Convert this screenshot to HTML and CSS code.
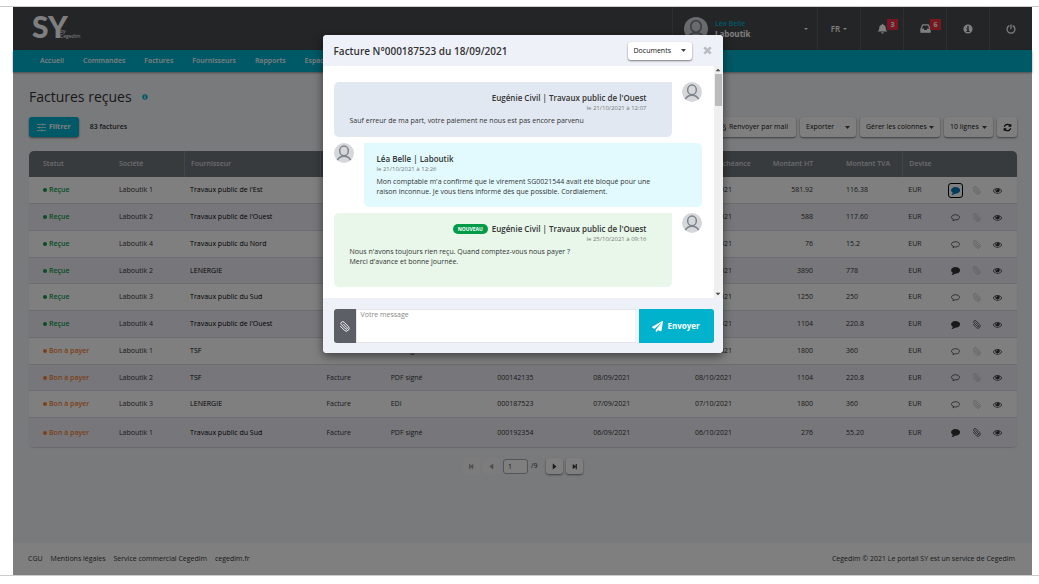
FILE: index.html
```html
<!DOCTYPE html>
<html lang="fr">
<head>
    <meta charset="UTF-8">
    <meta name="viewport" content="width=device-width, initial-scale=1.0">
    <title>Factures reçues</title>
    <link rel="stylesheet" href="styles.css">
</head>
<body>

<!-- Icons -->
<svg class="sprite" aria-hidden="true">
    <symbol id="user" viewBox="0 0 24 24">
        <g fill="none" stroke="currentColor" stroke-width="1.8">
            <ellipse cx="12" cy="9.500" rx="5.200" ry="5.800"/>
            <path d="M4 20.500c1.500-3 4.500-4.700 8-4.700s6.500 1.700 8 4.700"/>
        </g>
    </symbol>
    <symbol id="comment" viewBox="0 0 1792 1792">
        <path d="M1792 896q0 174-120 321.500t-326 233-450 85.500q-70 0-145-8-198 175-460 242-49 14-114 22-17 2-30.500-9t-17.500-29q-3-4 0-13t12-24q60-70 100-118t72-116 46-132q-157-89-247.500-220t-90.500-281q0-130 71-248.500t191-204.500 286-136.500 348-50.500q244 0 450 85.500t326 233 120 321.500z"/>
    </symbol>
    <symbol id="comment-o" viewBox="0 0 1792 1792">
        <path fill="none" stroke="currentColor" stroke-width="150" d="M1700 860c0 290-360 520-804 520q-90 0-180-14-150 140-330 200 90-110 110-280-404-170-404-426c0-290 360-520 804-520s804 230 804 520z"/>
    </symbol>
    <symbol id="clip" viewBox="0 0 24 24">
        <path fill="none" stroke="currentColor" stroke-width="2" d="M2.560 11.050l9.190 9.190a6 6 0 0 0 8.490-8.490l-9.190-9.190a4 4 0 0 0-5.660 5.660l9.200 9.190a2 2 0 0 0 2.830-2.830l-8.490-8.480"/>
    </symbol>
    <symbol id="eye" viewBox="0 0 1792 1792">
        <path d="M1664 960q-152-236-381-353 61 104 61 225 0 185-131.500 316.500t-316.500 131.500-316.500-131.500-131.500-316.500q0-121 61-225-229 117-381 353 133 205 333.500 326.500t434.500 121.500 434.500-121.500 333.500-326.500zm-720-384q0-20-14-34t-34-14q-125 0-214.500 89.500t-89.500 214.500q0 20 14 34t34 14 34-14 14-34q0-86 61-147t147-61q20 0 34-14t14-34zm848 384q0 34-20 69-140 230-376.500 368.500t-499.500 138.500-499.500-139-376.500-368q-20-35-20-69t20-69q140-229 376.500-368t499.500-139 499.500 139 376.500 368q20 35 20 69z"/>
    </symbol>
    <symbol id="bell" viewBox="0 0 24 24">
        <path d="M12 1.500a1.500 1.500 0 0 0-1.500 1.500v.8C7 4.500 5 7.200 5 10.500c0 4.500-1.500 6.500-3.500 8h21c-2-1.500-3.500-3.500-3.500-8 0-3.300-2-6-5.500-6.700V3A1.500 1.500 0 0 0 12 1.500zM9 20a3 3 0 0 0 6 0z"/>
    </symbol>
    <symbol id="inbox" viewBox="0 0 24 24">
        <path fill="none" stroke="currentColor" stroke-width="2.600" stroke-linejoin="round" d="M6 4h12l4 9v7H2v-7z"/>
        <path d="M2 12h6l1.500 3h5L16 12h6v8H2z"/>
    </symbol>
    <symbol id="info" viewBox="0 0 24 24">
        <path fill-rule="evenodd" d="M12 1a11 11 0 1 0 0 22 11 11 0 0 0 0-22zm-2 4h4v4h-4zm-2 5h6v6.500h2V19H8v-2.500h2v-4H8z"/>
    </symbol>
    <symbol id="power" viewBox="0 0 24 24">
        <path fill="none" stroke="currentColor" stroke-width="3" stroke-linecap="round" d="M7 4.500a9.500 9.500 0 1 0 10 0M12 1.800v9"/>
    </symbol>
    <symbol id="sliders" viewBox="0 0 24 24">
        <path fill="none" stroke="currentColor" stroke-width="2" d="M0 4h24M0 12h24M0 20h24M16 1v6M7 9v6M13 17v6"/>
    </symbol>
    <symbol id="mail" viewBox="0 0 24 24">
        <path fill="none" stroke="currentColor" stroke-width="2.500" d="M22 11v10H2V3h17M6 10l5 5L23 4"/>
    </symbol>
    <symbol id="refresh" viewBox="0 0 1792 1792">
        <path d="M1639 1056q0 5-1 7-64 268-268 434.500t-478 166.500q-146 0-282.500-55t-243.500-157l-129 129q-19 19-45 19t-45-19-19-45v-448q0-26 19-45t45-19h448q26 0 45 19t19 45-19 45l-137 137q71 66 161 102t187 36q134 0 250-65t186-179q11-17 53-117 8-23 30-23h192q13 0 22.500 9.500t9.500 22.500zm25-800v448q0 26-19 45t-45 19h-448q-26 0-45-19t-19-45 19-45l138-138q-148-137-349-137-134 0-250 65t-186 179q-11 17-53 117-8 23-30 23h-199q-13 0-22.500-9.500t-9.500-22.500v-7q65-268 270-434.500t480-166.500q146 0 284 55.500t245 156.500l130-129q19-19 45-19t45 19 19 45z"/>
    </symbol>
    <symbol id="plane" viewBox="0 0 512 512">
        <path d="M476 3.200L12.500 270.600c-18.100 10.400-15.800 35.600 2.200 43.200L121 358.400l287.300-253.200c5.500-4.900 13.300 2.600 8.600 8.300L176 407v80.500c0 23.600 28.500 32.900 42.500 15.800L282 426l124.600 52.200c14.200 6 30.400-2.900 33-18.200l72-432C515 7.800 493.300-6.800 476 3.200z"/>
    </symbol>
    <symbol id="cross" viewBox="0 0 24 24">
        <path fill="none" stroke="currentColor" stroke-width="7" d="M3.500 3.500l17 17M20.500 3.500l-17 17"/>
    </symbol>
    <symbol id="first" viewBox="0 0 24 24"><path d="M4 3h4v8l10-8v18L8 13v8H4z"/></symbol>
    <symbol id="prev" viewBox="0 0 24 24"><path d="M18 2v20L5 12z"/></symbol>
    <symbol id="next" viewBox="0 0 24 24"><path d="M6 2v20l13-10z"/></symbol>
    <symbol id="last" viewBox="0 0 24 24"><path d="M20 3h-4v8L6 3v18l10-8v8h4z"/></symbol>
    <symbol id="up" viewBox="0 0 10 10"><path d="M1 7h8L5 3z"/></symbol>
    <symbol id="down" viewBox="0 0 10 10"><path d="M1 3h8L5 7z"/></symbol>
</svg>

<div class="app">
    <header class="header">
        <a class="logo" href="#" aria-label="SY by Cegedim">
            <svg width="50" height="36" viewBox="0 0 50 36">
                <text class="logo-sy" x="-1" y="28">SY</text>
                <text class="logo-by" x="27" y="23">by</text>
                <text class="logo-by" x="27" y="28">Cegedim</text>
            </svg>
        </a>
        <div class="user">
            <span class="avatar avatar-big"><svg><use href="#user"/></svg></span>
            <div class="user-name">
                <span>Léa Belle</span>
                <strong>Laboutik</strong>
            </div>
            <i class="caret"></i>
        </div>
        <button class="tool">FR <i class="caret"></i></button>
        <button class="tool" aria-label="Notifications"><svg class="icon-11"><use href="#bell"/></svg><span class="badge">3</span></button>
        <button class="tool" aria-label="Messages"><svg class="icon-11"><use href="#inbox"/></svg><span class="badge">6</span></button>
        <button class="tool" aria-label="Informations"><svg class="icon-10"><use href="#info"/></svg></button>
        <button class="tool" aria-label="Déconnexion"><svg class="icon-10"><use href="#power"/></svg></button>
    </header>

    <nav class="nav">
        <a href="#">Accueil</a>
        <a href="#">Commandes</a>
        <a href="#">Factures</a>
        <a href="#">Fournisseurs</a>
        <a href="#">Rapports</a>
        <a href="#">Espace</a>
    </nav>

    <main class="content">
        <h1>Factures reçues <svg class="icon-6"><use href="#info"/></svg></h1>

        <div class="toolbar">
            <button class="btn btn-primary"><svg class="icon-9"><use href="#sliders"/></svg> Filtrer</button>
            <span class="count">83 factures</span>
            <div class="toolbar-right">
                <button class="btn"><svg class="icon-7"><use href="#mail"/></svg> Renvoyer par mail</button>
                <select class="btn select select-export" aria-label="Exporter"><option>Exporter</option></select>
                <select class="btn select select-columns" aria-label="Gérer les colonnes"><option>Gérer les colonnes</option></select>
                <select class="btn select select-lines" aria-label="Nombre de lignes"><option>10 lignes</option></select>
                <button class="btn btn-square" aria-label="Actualiser"><svg class="icon-9"><use href="#refresh"/></svg></button>
            </div>
        </div>

        <table class="invoices">
            <thead>
                <tr>
                    <th class="c-status">Statut</th>
                    <th class="c-company">Société</th>
                    <th class="c-supplier">Fournisseur</th>
                    <th class="c-type">Type</th>
                    <th class="c-format">Format</th>
                    <th class="c-number">Numéro</th>
                    <th class="c-date">Date</th>
                    <th class="c-due">Date d'échéance</th>
                    <th class="c-ht">Montant HT</th>
                    <th class="c-tva">Montant TVA</th>
                    <th class="c-currency">Devise</th>
                    <th class="c-actions"></th>
                </tr>
            </thead>
            <tbody id="rows"></tbody>
        </table>

        <div class="pagination">
            <button class="page-btn" disabled aria-label="Première page"><svg class="icon-7"><use href="#first"/></svg></button>
            <button class="page-btn" disabled aria-label="Page précédente"><svg class="icon-7"><use href="#prev"/></svg></button>
            <input type="text" value="1" aria-label="Page">
            <span>/9</span>
            <button class="page-btn" aria-label="Page suivante"><svg class="icon-7"><use href="#next"/></svg></button>
            <button class="page-btn" aria-label="Dernière page"><svg class="icon-7"><use href="#last"/></svg></button>
        </div>
    </main>

    <footer class="footer">
        <a href="#">CGU</a>
        <a href="#">Mentions légales</a>
        <a href="#">Service commercial Cegedim</a>
        <a href="#">cegedim.fr</a>
        <span>Cegedim © 2021 Le portail SY est un service de Cegedim</span>
    </footer>

    <div class="overlay">
        <section class="modal" role="dialog" aria-labelledby="modalTitle">
            <div class="modal-header">
                <h2 id="modalTitle">Facture N°000187523 du 18/09/2021</h2>
                <select class="btn select select-docs" aria-label="Documents"><option>Documents</option></select>
                <button class="close" aria-label="Fermer"><svg class="icon-9"><use href="#cross"/></svg></button>
            </div>

            <div class="modal-body">
                <div class="messages">
                    <div class="message">
                        <div class="bubble bubble-grey">
                            <h3>Eugénie Civil | Travaux public de l'Ouest</h3>
                            <time>le 21/10/2021 à 12:07</time>
                            <p>Sauf erreur de ma part, votre paiement ne nous est pas encore parvenu</p>
                        </div>
                        <span class="avatar"><svg><use href="#user"/></svg></span>
                    </div>
                    <div class="message">
                        <span class="avatar"><svg><use href="#user"/></svg></span>
                        <div class="bubble bubble-mine">
                            <h3>Léa Belle | Laboutik</h3>
                            <time>le 21/10/2021 à 12:26</time>
                            <p>Mon comptable m'a confirmé que le virement SG0021544 avait été bloqué pour une<br>raison inconnue. Je vous tiens informé dès que possible. Cordialement.</p>
                        </div>
                    </div>
                    <div class="message">
                        <div class="bubble bubble-new">
                            <h3><span class="new">NOUVEAU</span> Eugénie Civil | Travaux public de l'Ouest</h3>
                            <time>le 25/10/2021 à 09:16</time>
                            <p>Nous n'avons toujours rien reçu. Quand comptez-vous nous payer ?<br>Merci d'avance et bonne journée.</p>
                        </div>
                        <span class="avatar"><svg><use href="#user"/></svg></span>
                    </div>
                </div>
                <div class="scrollbar">
                    <svg><use href="#up"/></svg>
                    <div class="thumb"></div>
                    <svg><use href="#down"/></svg>
                </div>
            </div>

            <form class="modal-footer">
                <button type="button" class="attach" aria-label="Joindre un fichier"><svg class="icon-11"><use href="#clip"/></svg></button>
                <textarea placeholder="Votre message" aria-label="Votre message"></textarea>
                <button type="button" class="send"><svg class="icon-11"><use href="#plane"/></svg> Envoyer</button>
            </form>
        </section>
    </div>
</div>

<script>
    // statut, société, fournisseur, format, numéro, jour, HT, TVA, commentaire, pièce jointe
    const invoices = [
        ['Reçue', 'Laboutik 1', "Travaux public de l'Est", 'PDF signé', '000187523', '18', '581.92', '116.38', 'active', false],
        ['Reçue', 'Laboutik 2', "Travaux public de l'Ouest", 'PDF signé', '000187524', '17', '588', '117.60', '', false],
        ['Reçue', 'Laboutik 4', 'Travaux public du Nord', 'EDI', '000187525', '16', '76', '15.2', '', false],
        ['Reçue', 'Laboutik 2', 'LENERGIE', 'EDI', '000187526', '15', '3890', '778', 'full', false],
        ['Reçue', 'Laboutik 3', 'Travaux public du Sud', 'PDF signé', '000187527', '14', '1250', '250', '', false],
        ['Reçue', 'Laboutik 4', "Travaux public de l'Ouest", 'PDF signé', '000187528', '12', '1104', '220.8', 'full', true],
        ['Bon à payer', 'Laboutik 1', 'TSF', 'PDF signé', '000187529', '10', '1800', '360', '', false],
        ['Bon à payer', 'Laboutik 2', 'TSF', 'PDF signé', '000142135', '08', '1104', '220.8', '', false],
        ['Bon à payer', 'Laboutik 3', 'LENERGIE', 'EDI', '000187523', '07', '1800', '360', '', false],
        ['Bon à payer', 'Laboutik 1', 'Travaux public du Sud', 'PDF signé', '000192354', '06', '276', '55.20', 'full', true]
    ];

    document.getElementById('rows').innerHTML = invoices.map(([status, company, supplier, format, number, day, ht, tva, comment, clip]) => `
        <tr>
            <td class="c-status ${status === 'Reçue' ? 'received' : 'payable'}"><i class="dot"></i>${status}</td>
            <td>${company}</td>
            <td class="c-supplier">${supplier}</td>
            <td>Facture</td>
            <td>${format}</td>
            <td>${number}</td>
            <td>${day}/09/2021</td>
            <td>${day}/10/2021</td>
            <td class="c-ht">${ht}</td>
            <td>${tva}</td>
            <td>EUR</td>
            <td class="c-actions">
                <div class="actions">
                    <button class="${comment}" aria-label="Commentaires"><svg class="icon-9"><use href="#${comment ? 'comment' : 'comment-o'}"/></svg></button>
                    <button aria-label="Pièces jointes" ${clip ? '' : 'disabled'}><svg class="icon-9"><use href="#clip"/></svg></button>
                    <button aria-label="Voir"><svg class="icon-9"><use href="#eye"/></svg></button>
                </div>
            </td>
        </tr>`).join('');
</script>

</body>
</html>
```

FILE: styles.css
```css
* {
    box-sizing: border-box;
}

body {
    display: flex;
    flex-direction: column;
    margin: 0;
    padding: 6px 0 8px;
    min-height: 100vh;
    font-family: "Open Sans", "Noto Sans", sans-serif;
    font-size: 7px;
    line-height: 10px;
    color: #333;
    background-color: #fff;
}

button,
select,
input,
textarea {
    margin: 0;
    padding: 0;
    border: none;
    font: inherit;
    color: inherit;
    background: none;
}

h1,
h2,
h3,
p {
    margin: 0;
}

a {
    color: inherit;
    text-decoration: none;
}

svg {
    flex: none;
    fill: currentColor;
}

.sprite {
    position: absolute;
    width: 0;
    height: 0;
}

.icon-6 { width: 6px; height: 6px; }
.icon-7 { width: 7px; height: 7px; }
.icon-9 { width: 9px; height: 9px; }
.icon-10 { width: 10px; height: 10px; }
.icon-11 { width: 11px; height: 11px; }

/* full-width rules above and below the app */
body::before,
body::after {
    content: "";
    height: 1px;
    background-color: #ccc;
}

.app {
    position: relative;
    display: flex;
    flex: 1;
    flex-direction: column;
    margin: 0 7px 0 13px;
    background-color: #f3f4f9;
}

/* Header */
.header {
    display: flex;
    align-items: stretch;
    height: 43px;
    color: #fff;
    background-color: #484a4d;
}

.logo {
    flex: 1;
    padding: 3px 20px;
}

.logo svg {
    overflow: visible;
}

.logo-sy {
    font-family: Lato, sans-serif;
    font-size: 30px;
    font-weight: 900;
}

.logo-by {
    font-size: 5px;
}

.user {
    display: flex;
    align-items: center;
    width: 145px;
    padding: 0 9px 0 11px;
    gap: 7px;
    border-left: 1px solid #5c5f63;
}

.user-name {
    display: flex;
    flex: 1;
    flex-direction: column;
}

.user-name span {
    color: #00b2cc;
    font-weight: 600;
}

.user-name strong {
    font-size: 8px;
}

.avatar {
    display: flex;
    flex: none;
    width: 20px;
    height: 20px;
    border-radius: 50%;
    color: #7d848b;
    background-color: #d5d7db;
}

.avatar svg {
    width: 100%;
    height: 100%;
}

.avatar-big {
    width: 24px;
    height: 24px;
}

.caret {
    display: inline-block;
    border: 2px solid transparent;
    border-top-color: currentColor;
    border-bottom: none;
}

.tool {
    position: relative;
    display: flex;
    align-items: center;
    justify-content: center;
    gap: 3px;
    width: 43px;
    border-left: 1px solid #5c5f63;
    font-size: 8px;
    font-weight: 600;
}

.badge {
    position: absolute;
    top: 12px;
    left: 26px;
    width: 11px;
    height: 11px;
    font-size: 7px;
    font-weight: 700;
    line-height: 11px;
    background-color: #f02f40;
}

.nav {
    display: flex;
    align-items: center;
    gap: 19px;
    height: 22px;
    padding: 0 27px;
    font-weight: 600;
    color: #fff;
    background-color: #00b2cc;
    box-shadow: 0 1px 2px rgba(0, 0, 0, 0.4);
}

/* Content */
.content {
    flex: 1;
    padding: 16px 15px 0 16px;
}

h1 {
    display: flex;
    align-items: center;
    gap: 10px;
    font-size: 14px;
    font-weight: 400;
    line-height: 18px;
}

h1 svg {
    color: #00b2cc;
}

.toolbar {
    display: flex;
    align-items: center;
    margin: 11px 0 14px;
}

.toolbar-right {
    display: flex;
    gap: 4px;
    margin-left: auto;
}

.count {
    margin-left: 11px;
    font-weight: 600;
}

.btn {
    display: flex;
    align-items: center;
    gap: 3px;
    height: 20px;
    padding: 0 8px;
    border-radius: 3px;
    color: #111;
    background-color: #fff;
    box-shadow: 0 1px 2px rgba(0, 0, 0, 0.5);
}

.btn-primary {
    color: #fff;
    font-weight: 700;
    background-color: #00b2cc;
}

.btn-square {
    justify-content: center;
    width: 20px;
    padding: 0;
}

.select {
    appearance: none;
    padding: 0 6px;
    background-image: url("data:image/svg+xml,%3Csvg xmlns='http://www.w3.org/2000/svg' viewBox='0 0 10 6'%3E%3Cpath d='M0 0h10L5 6z' fill='%23444'/%3E%3C/svg%3E");
    background-repeat: no-repeat;
    background-position: right 6px center;
    background-size: 5px 3px;
}

.select-export { width: 56px; }
.select-columns { width: 80px; }
.select-lines { width: 49px; }
.select-docs { width: 64px; height: 18px; }

.invoices {
    width: 100%;
    table-layout: fixed;
    border-spacing: 0;
    border-radius: 5px;
    overflow: hidden;
    box-shadow: 0 1px 1px #ccd0d8;
}

.invoices th,
.invoices td {
    height: 27px;
    padding: 0 6px;
    text-align: left;
    white-space: nowrap;
}

.invoices th {
    height: 26px;
    color: #d5d8dc;
    font-weight: 600;
    background-color: #6f777d;
}

.invoices th.c-type,
.invoices th.c-supplier,
.invoices th.c-currency {
    border-left: 1px solid #868d93;
}

.invoices td {
    border-bottom: 1px solid #d8dae0;
    background-color: #fff;
}

.invoices tr:nth-child(even) td {
    background-color: #eeeff7;
}

.invoices tr:nth-child(4n) td {
    height: 26px;
}

.invoices tr:last-child td {
    height: 29px;
    border-bottom: none;
}

.invoices .c-status { width: 8.5%; padding-left: 14px; }
.c-company { width: 7.2%; }
.c-supplier { width: 13.8%; }
.c-type { width: 6.5%; }
.c-format { width: 10.8%; }
.c-number { width: 9.7%; }
.c-date { width: 10.3%; }
.c-due { width: 7.8%; }
.c-ht { width: 7.5%; }
.c-tva { width: 6.3%; }
.c-currency { width: 4.7%; }
.invoices .c-actions { width: 6.9%; padding: 0; }

.invoices td.c-supplier {
    color: #000;
}

.invoices .c-ht {
    padding-right: 27px;
    padding-left: 0;
    text-align: right;
}

td.c-status {
    font-weight: 600;
}

.received {
    color: #0a9b48;
}

.payable {
    color: #f58233;
}

.dot {
    display: inline-block;
    width: 4px;
    height: 4px;
    margin-right: 2px;
    border-radius: 50%;
    vertical-align: middle;
    background-color: currentColor;
}

.actions {
    display: flex;
    gap: 8px;
}

.actions button {
    display: flex;
    align-items: center;
    justify-content: center;
    width: 13px;
    height: 13px;
}

.actions button:disabled {
    color: #b5b8bd;
}

.actions .active {
    color: #0077b3;
    border-radius: 2px;
    outline: 1px solid #000;
}

.pagination {
    display: flex;
    align-items: center;
    justify-content: center;
    gap: 3px;
    margin-top: 11px;
}

.page-btn {
    display: flex;
    align-items: center;
    justify-content: center;
    width: 17px;
    height: 16px;
    border-radius: 3px;
    background-color: #fff;
    box-shadow: 0 1px 2px rgba(0, 0, 0, 0.5);
}

.page-btn:disabled {
    color: #999;
    box-shadow: none;
    background-color: #f8f8fb;
}

.pagination input {
    width: 25px;
    height: 15px;
    padding: 0 4px;
    border: 1px solid #aaa;
    border-radius: 3px;
    background-color: #fff;
}

.pagination span {
    width: 12px;
}

.footer {
    display: flex;
    align-items: center;
    gap: 8px;
    height: 32px;
    padding: 0 17px 0 15px;
    background-color: #fff;
}

.footer span {
    margin-left: auto;
}

/* Messages dialog */
.overlay {
    position: absolute;
    inset: 0;
    display: flex;
    align-items: flex-start;
    justify-content: center;
    padding-top: 28px;
    background-color: rgba(0, 0, 0, 0.5);
}

.modal {
    width: 100%;
    max-width: 400px;
    border-radius: 4px;
    overflow: hidden;
    background-color: #fff;
    box-shadow: 0 3px 10px rgba(0, 0, 0, 0.5);
}

.modal-header {
    display: flex;
    align-items: center;
    height: 31px;
    padding: 0 11px;
    background-color: #eef1f8;
}

.modal-header h2 {
    flex: 1;
    font-size: 10px;
    font-weight: 600;
}

.close {
    display: flex;
    margin-left: 11px;
    color: #b9bcc2;
}

.modal-body {
    display: flex;
}

.messages {
    display: flex;
    flex: 1;
    flex-direction: column;
    gap: 6px;
    padding: 16px 12px 11px 11px;
}

.message {
    display: flex;
    gap: 10px;
}

.bubble {
    flex: 1;
    padding: 10px 25px 11px 16px;
    border-radius: 5px;
}

.bubble h3 {
    display: flex;
    align-items: center;
    justify-content: flex-end;
    gap: 4px;
    font-size: 8px;
    font-weight: 600;
    line-height: 12px;
}

.bubble time {
    display: block;
    font-size: 6px;
    line-height: 8px;
    text-align: right;
    color: #777;
}

.bubble p {
    margin-top: 4px;
}

.bubble-grey {
    background-color: #e2e8f1;
    border-top-right-radius: 0;
}

.bubble-mine {
    padding-bottom: 10px;
    padding-left: 13px;
    background-color: #e2fafe;
    border-top-left-radius: 0;
}

.bubble-mine h3 {
    justify-content: flex-start;
}

.bubble-mine time {
    text-align: left;
}

.bubble-new {
    padding-bottom: 20px;
    background-color: #e8f7ea;
    border-top-right-radius: 0;
}

.new {
    padding: 0 5px;
    border-radius: 5px;
    font-size: 5px;
    font-weight: 700;
    line-height: 10px;
    color: #fff;
    background-color: #009b48;
}

.scrollbar {
    display: flex;
    flex-direction: column;
    align-items: center;
    width: 9px;
    background-color: #f0f0f1;
    color: #444;
}

.scrollbar svg {
    width: 6px;
    height: 8px;
}

.thumb {
    width: 7px;
    height: 32px;
    margin-bottom: auto;
    background-color: #bbb;
}

.modal-footer {
    display: flex;
    height: 55px;
    padding: 11px 9px 10px 11px;
    background-color: #eef1f8;
}

.attach {
    display: flex;
    align-items: center;
    justify-content: center;
    width: 22px;
    border-radius: 3px 0 0 3px;
    color: #fff;
    background-color: #5c6066;
}

.modal-footer textarea {
    flex: 1;
    padding: 0 4px;
    border: 1px solid #e3e5ea;
    border-right: 4px solid #f4f4f6;
    resize: none;
    background-color: #fff;
}

.modal-footer textarea::placeholder {
    color: #888;
}

.send {
    display: flex;
    align-items: center;
    justify-content: center;
    gap: 4px;
    width: 75px;
    border-radius: 0 3px 3px 0;
    font-size: 8px;
    font-weight: 700;
    color: #fff;
    background-color: #00b2cc;
}
```
